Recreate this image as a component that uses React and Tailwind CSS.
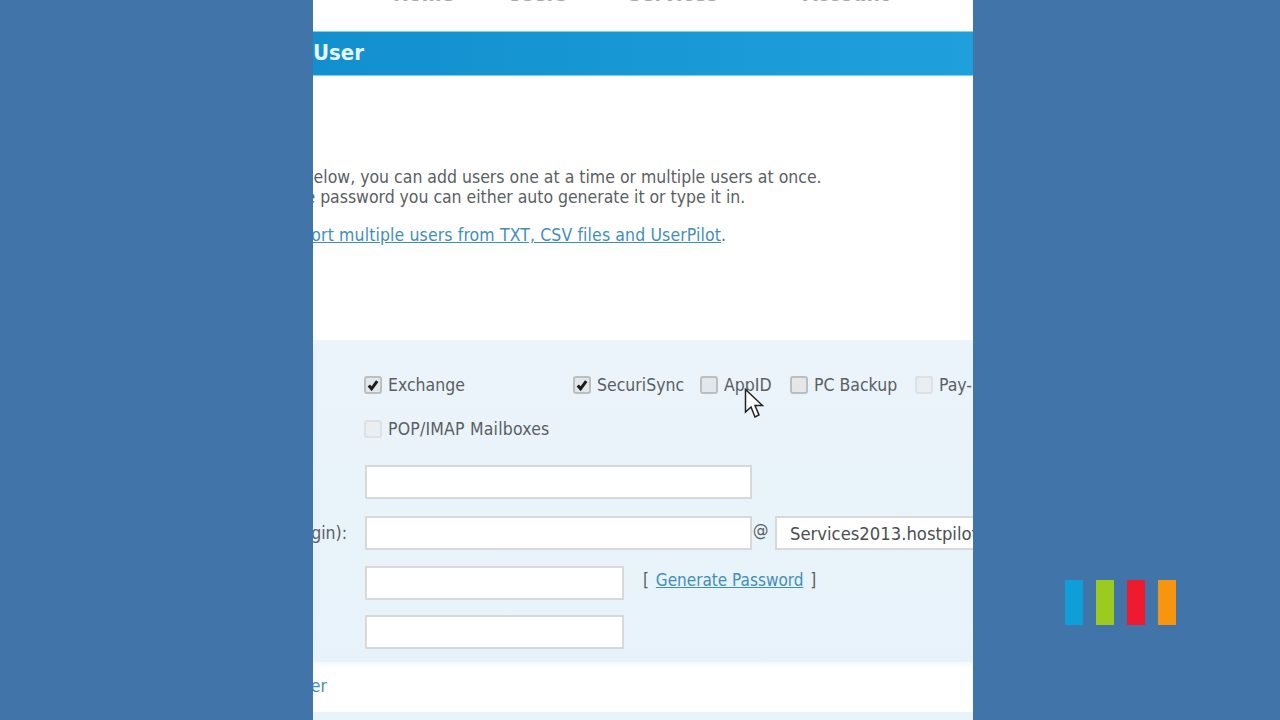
const checkBox = "w-[18px] h-[18px] shrink-0 rounded-[3px] border-2 flex items-center justify-center";

function Check({ on, faded }) {
  return (
    <span className={`${checkBox} ${faded ? "border-[#dde1e4] bg-[#eaeef1]" : "border-[#bcbfc2] bg-[#e4e7e9]"}`}>
      {on && (
        <svg width="12" height="12" viewBox="0 0 12 12">
          <path d="M1.8 6.5 L4.6 9.8 L10.2 2.2" fill="none" stroke="#1c1c1c" strokeWidth="3" />
        </svg>
      )}
    </span>
  );
}

function Option({ label, on, faded, className }) {
  return (
    <div className={`flex items-center gap-[6px] shrink-0 ${className}`}>
      <Check on={on} faded={faded} />
      <span className="whitespace-nowrap">{label}</span>
    </div>
  );
}

function Field({ label, width, children, className }) {
  return (
    <div className={`flex items-center ${className}`}>
      <div className="w-[52px] shrink-0 flex justify-end pr-[18px] whitespace-nowrap">{label}</div>
      <div className={`${width} h-[34px] shrink-0 bg-white border-2 border-[#d6d8da]`}></div>
      {children}
    </div>
  );
}

export default function App() {
  return (
    <div className="w-[1280px] h-[720px] overflow-hidden flex bg-[#4174a8] text-[#5a5f63] text-[17.5px] font-['DejaVu_Sans_Condensed','DejaVu_Sans',sans-serif]">
      <div className="w-[313px] shrink-0"></div>

      <main className="w-[660px] shrink-0 h-full overflow-hidden bg-white flex flex-col relative">
        <nav className="h-[31px] shrink-0 -mt-[17px] flex text-[#a4a9ae] font-bold text-[21px] leading-[22px] pl-[80px]">
          <span className="w-[114px] shrink-0">Home</span>
          <span className="w-[121px] shrink-0">Users</span>
          <span className="w-[175px] shrink-0">Services</span>
          <span>Account</span>
        </nav>

        <div className="mt-[17px] h-[45px] shrink-0 flex items-center pb-[2px] bg-gradient-to-r from-[#118fce] to-[#1fa0dc] border-y border-[#7fd0f0] text-[#e6f6fd] font-bold text-[22px]">
          <div className="w-[51px] flex justify-end whitespace-nowrap">Add User</div>
        </div>

        <section className="h-[264px] shrink-0 pt-[91px] leading-[20px]">
          <div className="-ml-[131px] whitespace-nowrap">Using the form below, you can add users one at a time or multiple users at once.</div>
          <div className="-ml-[53px] whitespace-nowrap tracking-[-0.03px]">For the password you can either auto generate it or type it in.</div>
          <div className="mt-[18px] -ml-[32px] whitespace-nowrap">
            <a className="underline text-[#3f8fb8] tracking-[0.12px]">Import multiple users from TXT, CSV files and UserPilot</a>.
          </div>
        </section>

        <form className="h-[322px] shrink-0 bg-gradient-to-b from-[#ebf4fa] to-[#e7f2fa] pt-[35px]">
          <div className="flex pl-[51px] h-[20px] overflow-hidden">
            <Option label="Exchange" on className="w-[209px]" />
            <Option label="SecuriSync" on className="w-[127px]" />
            <Option label="AppID" className="w-[90px]" />
            <Option label="PC Backup" className="w-[125px]" />
            <Option label="Pay-Per-Use" faded />
          </div>
          <div className="flex pl-[51px] mt-[24px] h-[20px] tracking-[0.2px]">
            <Option label="POP/IMAP Mailboxes" faded />
          </div>
          <Field width="w-[387px]" className="mt-[26px]" />
          <Field label="Login):" width="w-[387px]" className="mt-[17px]">
            <span className="w-[17px] mr-[6px] shrink-0 text-center -mt-[6px]">@</span>
            <div className="h-[34px] w-[220px] shrink-0 bg-white border-2 border-[#d6d8da] pl-[13px] pt-[1px] flex items-center whitespace-nowrap text-[#4a4f53] text-[18.3px]">Services2013.hostpilot.com</div>
          </Field>
          <Field width="w-[259px]" className="mt-[16px]">
            <span className="ml-[19px] whitespace-nowrap -mt-[4px] text-[17px]">[ <a className="underline text-[#3f8fb8] mx-[2px]">Generate Password</a> ]</span>
          </Field>
          <Field width="w-[259px]" className="mt-[15px]" />
        </form>

        <footer className="h-[50px] shrink-0 bg-gradient-to-b from-[#f4f9fc] to-white to-[12%] flex items-center pb-[2px]">
          <div className="w-[14px] flex justify-end whitespace-nowrap text-[#3f8fb8]">Add User</div>
        </footer>
        <div className="flex-1 bg-[#e8f3fa]"></div>

        <svg className="absolute left-[431px] top-[388px]" width="20" height="31" viewBox="0 0 20 31">
          <path d="M1.5 1.5 V24 L7 19 L11 29 L15 27 L11 17.5 H18.5 Z" fill="#fff" stroke="#222" strokeWidth="1.5" />
        </svg>
      </main>

      <aside className="flex-1 pl-[92px] pt-[580px] flex gap-[13px] items-start">
        <div className="w-[18px] h-[45px] bg-[#0f9fd8]"></div>
        <div className="w-[18px] h-[45px] bg-[#9bcb1e]"></div>
        <div className="w-[18px] h-[45px] bg-[#ee1a2e]"></div>
        <div className="w-[18px] h-[45px] bg-[#f8950f]"></div>
      </aside>
    </div>
  );
}
